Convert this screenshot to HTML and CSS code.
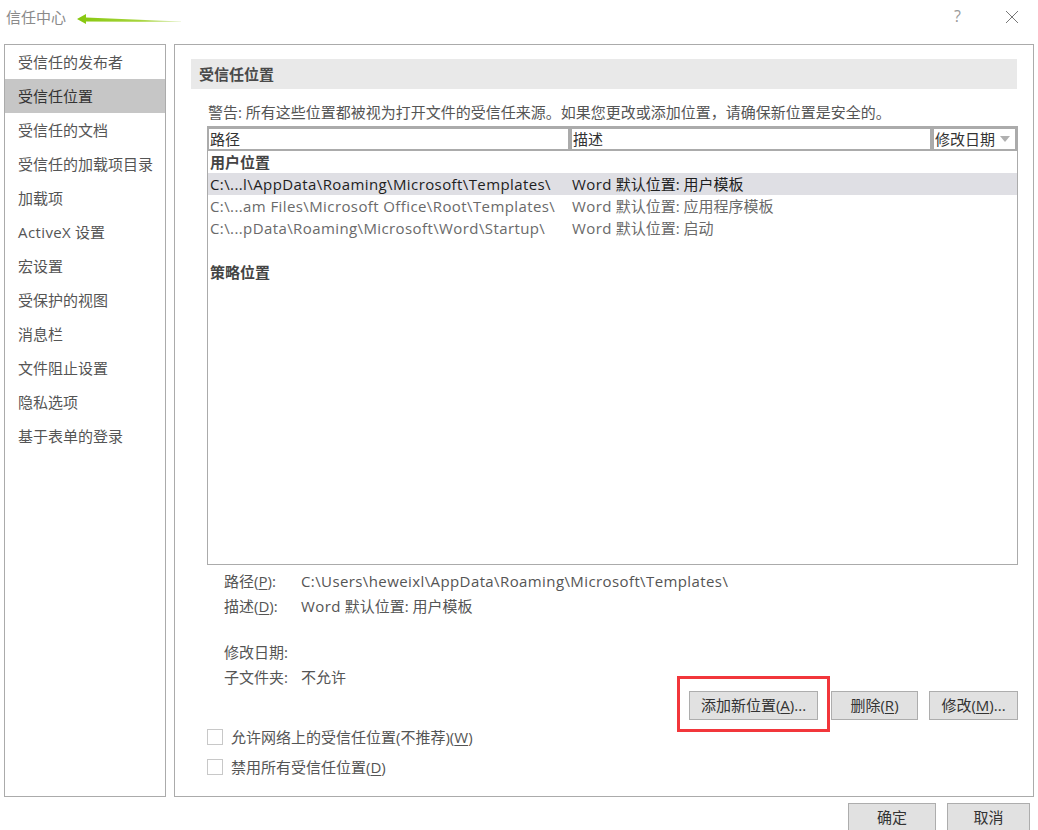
FILE: index.html
```html
<!DOCTYPE html>
<html lang="zh-CN">
<head>
  <meta charset="UTF-8">
  <title>信任中心</title>
  <link rel="stylesheet" href="styles.css">
</head>
<body>
  <div class="dialog">
    <div class="titlebar">
      <div class="title">信任中心</div>
      <svg class="arrow" width="110" height="14" viewBox="0 0 110 14">
        <defs>
          <linearGradient id="fade" x1="0" x2="1" y1="0" y2="0">
            <stop offset="0" stop-color="#86c70d"/>
            <stop offset="0.6" stop-color="#a6d43c"/>
            <stop offset="1" stop-color="#e4f2c8"/>
          </linearGradient>
        </defs>
        <polygon points="0,5 9,0 9,3.6 104,7.4 104,8 9,7.6 9,10" fill="url(#fade)"/>
      </svg>
      <div class="title-actions">
        <span class="help">?</span>
        <svg class="close" width="14" height="14" viewBox="0 0 14 14">
          <path d="M1 1 L13 13 M13 1 L1 13" stroke="#777" stroke-width="1" fill="none"/>
        </svg>
      </div>
    </div>

    <div class="body">
      <ul class="nav">
        <li>受信任的发布者</li>
        <li class="active">受信任位置</li>
        <li>受信任的文档</li>
        <li>受信任的加载项目录</li>
        <li>加载项</li>
        <li><span class="latin">ActiveX</span> 设置</li>
        <li>宏设置</li>
        <li>受保护的视图</li>
        <li>消息栏</li>
        <li>文件阻止设置</li>
        <li>隐私选项</li>
        <li>基于表单的登录</li>
      </ul>

      <div class="panel">
        <div class="section-title">受信任位置</div>
        <div class="content">
          <p class="warning">警告: 所有这些位置都被视为打开文件的受信任来源。如果您更改或添加位置，请确保新位置是安全的。</p>

          <div class="table">
            <div class="thead">
              <div class="th col-path">路径</div>
              <div class="th col-desc">描述</div>
              <div class="th col-date">修改日期<span class="sort"></span></div>
            </div>
            <div class="group">用户位置</div>
            <div class="row selected">
              <span class="col-path latin">C:\...l\AppData\Roaming\Microsoft\Templates\</span>
              <span class="col-desc"><span class="latin">Word</span> 默认位置: 用户模板</span>
            </div>
            <div class="row">
              <span class="col-path latin">C:\...am Files\Microsoft Office\Root\Templates\</span>
              <span class="col-desc"><span class="latin">Word</span> 默认位置: 应用程序模板</span>
            </div>
            <div class="row">
              <span class="col-path latin">C:\...pData\Roaming\Microsoft\Word\Startup\</span>
              <span class="col-desc"><span class="latin">Word</span> 默认位置: 启动</span>
            </div>
            <div class="row"></div>
            <div class="group">策略位置</div>
          </div>

          <div class="details">
            <div class="detail"><span class="label">路径(<u>P</u>):</span><span class="latin">C:\Users\heweixl\AppData\Roaming\Microsoft\Templates\</span></div>
            <div class="detail"><span class="label">描述(<u>D</u>):</span><span><span class="latin">Word</span> 默认位置: 用户模板</span></div>
            <div class="detail spaced"><span class="label">修改日期:</span><span></span></div>
            <div class="detail"><span class="label">子文件夹:</span><span>不允许</span></div>
          </div>

          <div class="actions">
            <span class="highlight"><button class="btn btn-add">添加新位置(<u>A</u>)...</button></span>
            <button class="btn btn-del">删除(<u>R</u>)</button>
            <button class="btn btn-edit">修改(<u>M</u>)...</button>
          </div>

          <label class="check"><span class="box"></span>允许网络上的受信任位置(不推荐)(<u>W</u>)</label>
          <label class="check"><span class="box"></span>禁用所有受信任位置(<u>D</u>)</label>
        </div>
      </div>
    </div>

    <div class="footer">
      <button class="btn btn-ok">确定</button>
      <button class="btn btn-cancel">取消</button>
    </div>
  </div>
</body>
</html>
```

FILE: styles.css
```css
* {
  box-sizing: border-box;
}

html, body {
  margin: 0;
  padding: 0;
  background: #fff;
}

body {
  width: 1038px;
  height: 830px;
  overflow: hidden;
  font-family: "Open Sans", "Noto Sans CJK SC", sans-serif;
  font-size: 15px;
  color: #444;
}

u {
  text-decoration: underline;
  text-underline-offset: 2px;
}

/* latin text in the original font runs a little wider */
.latin {
  letter-spacing: 0.4px;
}

/* title bar */
.titlebar {
  height: 44px;
  display: flex;
  align-items: flex-start;
  padding: 6px 0 0 6px;
}

.title {
  font-size: 15px;
  line-height: 22px;
  color: #8a8a8a;
}

.arrow {
  margin: 8px 0 0 11px;
}

.title-actions {
  margin-left: auto;
  display: flex;
  align-items: center;
  padding-right: 19px;
}

.help {
  font-size: 16px;
  line-height: 20px;
  color: #999;
  margin-right: 44px;
}

.close {
  margin-top: 1px;
}

/* main area */
.body {
  display: flex;
  gap: 8px;
  padding: 0 4px;
  height: 753px;
}

.nav {
  width: 162px;
  margin: 0;
  padding: 0;
  list-style: none;
  border: 1px solid #ababab;
}

.nav li {
  height: 34px;
  line-height: 34px;
  padding-left: 13px;
  color: #555;
  white-space: nowrap;
}

.nav li.active {
  background: #c6c6c6;
  color: #333;
}

.panel {
  flex: 1;
  border: 1px solid #ababab;
  padding: 14px 16px 0 16px;
}

.section-title {
  height: 30px;
  line-height: 30px;
  background: #e9e9e9;
  padding-left: 8px;
  font-weight: bold;
  color: #4a4a4a;
}

.content {
  padding-left: 16px;
  padding-right: 0;
  margin-right: -1px;
}

.warning {
  margin: 13px 0 0 1px;
  line-height: 20px;
  color: #555;
  white-space: nowrap;
}

/* table */
.table {
  margin-top: 4px;
  height: 439px;
  border: 1px solid #ababab;
}

.thead {
  display: flex;
  gap: 4px;
  background: #ababab;
  padding: 2px 2px 2px 1px;
  height: 24px;
}

.th {
  background: #fff;
  line-height: 20px;
  padding-left: 1px;
  color: #333;
  display: flex;
  align-items: center;
}

.col-path {
  width: 359px;
  flex: none;
}

.col-desc {
  width: 358px;
  flex: none;
}

.col-date {
  flex: 1;
}

.sort {
  margin-left: 5px;
  width: 0;
  height: 0;
  border-left: 5px solid transparent;
  border-right: 5px solid transparent;
  border-top: 6px solid #b0b0b0;
}

.group {
  height: 22px;
  line-height: 22px;
  padding-left: 2px;
  font-weight: bold;
  color: #444;
}

.row {
  display: flex;
  height: 22px;
  line-height: 22px;
  padding-left: 2px;
  color: #6a6a6a;
  white-space: nowrap;
}

.row .col-path {
  width: 362px;
}

.row.selected {
  background: #dfdfe4;
  color: #1e1e1e;
}

/* details */
.details {
  margin-top: 4px;
  padding-left: 17px;
  color: #555;
}

.detail {
  display: flex;
  height: 25px;
  line-height: 25px;
  white-space: nowrap;
}

.detail.spaced {
  margin-top: 21px;
}

.label {
  width: 77px;
  flex: none;
}

/* buttons */
.actions {
  display: flex;
  justify-content: flex-end;
  margin-top: 1px;
  gap: 11px;
}

.btn {
  font-family: inherit;
  font-size: 15px;
  color: #333;
  background: #e1e1e1;
  border: 1px solid #adadad;
  height: 29px;
  padding: 0;
  line-height: 27px;
  border-radius: 0;
}

.highlight {
  position: relative;
  display: flex;
  margin-right: 2px;
}

.highlight::after {
  content: "";
  position: absolute;
  left: -12px;
  right: -12px;
  top: -15px;
  bottom: -12px;
  border: 3px solid #f2363b;
}

.btn-add {
  width: 129px;
}

.btn-del {
  width: 87px;
}

.btn-edit {
  width: 89px;
}

.check {
  display: flex;
  align-items: center;
  height: 20px;
  line-height: 20px;
  color: #555;
  margin-top: 7px;
}

.check + .check {
  margin-top: 10px;
}

.box {
  width: 16px;
  height: 16px;
  border: 1px solid #c8c8c8;
  margin-right: 8px;
  flex: none;
}

/* footer */
.footer {
  display: flex;
  justify-content: flex-end;
  gap: 11px;
  padding: 6px 8px 0 0;
}

.btn-ok {
  width: 88px;
}

.btn-cancel {
  width: 83px;
}
```
